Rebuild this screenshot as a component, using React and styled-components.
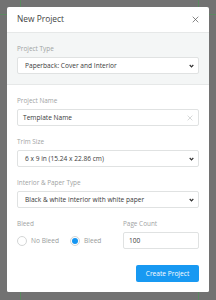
import React from "react";
import styled, { createGlobalStyle } from "styled-components";

const Global = createGlobalStyle`
  html, body { margin: 0; padding: 0; }
  body {
    width: 216px;
    height: 300px;
    overflow: hidden;
    font-family: "Open Sans", "Noto Sans", sans-serif;
    background-color: #727272;
    background-image:
      linear-gradient(to right, transparent 20px, #5b8860 20px, #5b8860 21px, transparent 21px),
      linear-gradient(to right, transparent 198px, #5b8860 198px, #5b8860 199px, transparent 199px),
      linear-gradient(to bottom, transparent 14px, #5b8860 14px, #5b8860 15px, transparent 15px);
  }
  * { box-sizing: border-box; }
`;

const Backdrop = styled.div`
  padding: 7px;
  width: 216px;
  height: 300px;
`;

const Modal = styled.div`
  width: 202px;
  background: #fff;
  border-radius: 2px;
  overflow: hidden;
  display: flex;
  flex-direction: column;
`;

const Header = styled.div`
  height: 26px;
  padding: 0 10px;
  display: flex;
  align-items: center;
  justify-content: space-between;
  border-bottom: 1px solid #e6e8e8;
`;

const Title = styled.div`
  font-size: 8.4px;
  color: #444;
  line-height: 1;
`;

const CloseButton = styled.button`
  border: 0;
  background: none;
  padding: 0;
  width: 7px;
  height: 7px;
  display: flex;
  color: #555;
`;

const Section = styled.div`
  padding: 12px 10px 10px;
  background: ${(p) => (p.$tinted ? "#f4f6f6" : "#fff")};
  border-bottom: ${(p) => (p.$tinted ? "1px solid #e6e8e8" : "0")};
`;

const Field = styled.div`
  display: flex;
  flex-direction: column;
  gap: 4px;
  margin-bottom: ${(p) => (p.$last ? "0" : "12px")};
`;

const Label = styled.div`
  font-size: 6.4px;
  line-height: 8px;
  height: 8px;
  color: #a0a3a3;
`;

const Box = styled.div`
  height: 17px;
  background: #fff;
  border: 1px solid #e0e2e2;
  border-radius: 2px;
  display: flex;
  align-items: center;
  justify-content: space-between;
  padding: ${(p) => (p.$select ? "0 4px 0 7px" : "0 5px 0 5px")};
  font-size: 6.6px;
  color: #3a3a3a;
  white-space: nowrap;
`;

const Row = styled.div`
  display: grid;
  grid-template-columns: 100px 76px;
  column-gap: 6px;
`;

const RadioGroup = styled.div`
  height: 17px;
  display: flex;
  align-items: center;
  gap: 11px;
`;

const RadioOption = styled.label`
  display: flex;
  align-items: center;
  gap: 4px;
  font-size: 6.6px;
  color: #999c9c;
`;

const RadioCircle = styled.span`
  width: 10px;
  height: 10px;
  border-radius: 50%;
  border: 1px solid #d4d6d6;
  background: #fff;
  display: flex;
  align-items: center;
  justify-content: center;
  &::after {
    content: "";
    width: 6px;
    height: 6px;
    border-radius: 50%;
    background: ${(p) => (p.$checked ? "#1596f2" : "transparent")};
  }
`;

const Footer = styled.div`
  display: flex;
  justify-content: flex-end;
  margin-top: 16px;
`;

const PrimaryButton = styled.button`
  height: 17px;
  width: 63px;
  border: 0;
  border-radius: 2px;
  background: #1899f2;
  color: #fff;
  font-family: "Open Sans", sans-serif;
  font-size: 6.6px;
  padding: 0;
`;

const Chevron = () => (
  <svg width="5" height="4" viewBox="0 0 5 4">
    <path d="M0.7 1 L2.5 2.9 L4.3 1" fill="none" stroke="#333" strokeWidth="1.2" />
  </svg>
);

const Cross = ({ size, color, w }) => (
  <svg width={size} height={size} viewBox="0 0 10 10">
    <path d="M1 1 L9 9 M9 1 L1 9" stroke={color} strokeWidth={w} fill="none" />
  </svg>
);

const SelectField = ({ label, value, last }) => (
  <Field $last={last}>
    <Label>{label}</Label>
    <Box $select>
      <span>{value}</span>
      <Chevron />
    </Box>
  </Field>
);

export default function App() {
  return (
    <>
      <Global />
      <Backdrop>
        <Modal>
          <Header>
            <Title>New Project</Title>
            <CloseButton aria-label="Close">
              <Cross size={7} color="#555" w={1} />
            </CloseButton>
          </Header>
          <Section $tinted>
            <SelectField label="Project Type" value="Paperback: Cover and Interior" last />
          </Section>
          <Section>
            <Field>
              <Label>Project Name</Label>
              <Box>
                <span>Template Name</span>
                <Cross size={6} color="#b5b8b8" w={0.9} />
              </Box>
            </Field>
            <SelectField label="Trim Size" value="6 x 9 in (15.24 x 22.86 cm)" />
            <SelectField label="Interior & Paper Type" value="Black & white interior with white paper" />
            <Row>
              <Field $last>
                <Label>Bleed</Label>
                <RadioGroup>
                  <RadioOption>
                    <RadioCircle />
                    No Bleed
                  </RadioOption>
                  <RadioOption>
                    <RadioCircle $checked />
                    Bleed
                  </RadioOption>
                </RadioGroup>
              </Field>
              <Field $last>
                <Label>Page Count</Label>
                <Box>
                  <span>100</span>
                </Box>
              </Field>
            </Row>
            <Footer>
              <PrimaryButton>Create Project</PrimaryButton>
            </Footer>
          </Section>
        </Modal>
      </Backdrop>
    </>
  );
}
